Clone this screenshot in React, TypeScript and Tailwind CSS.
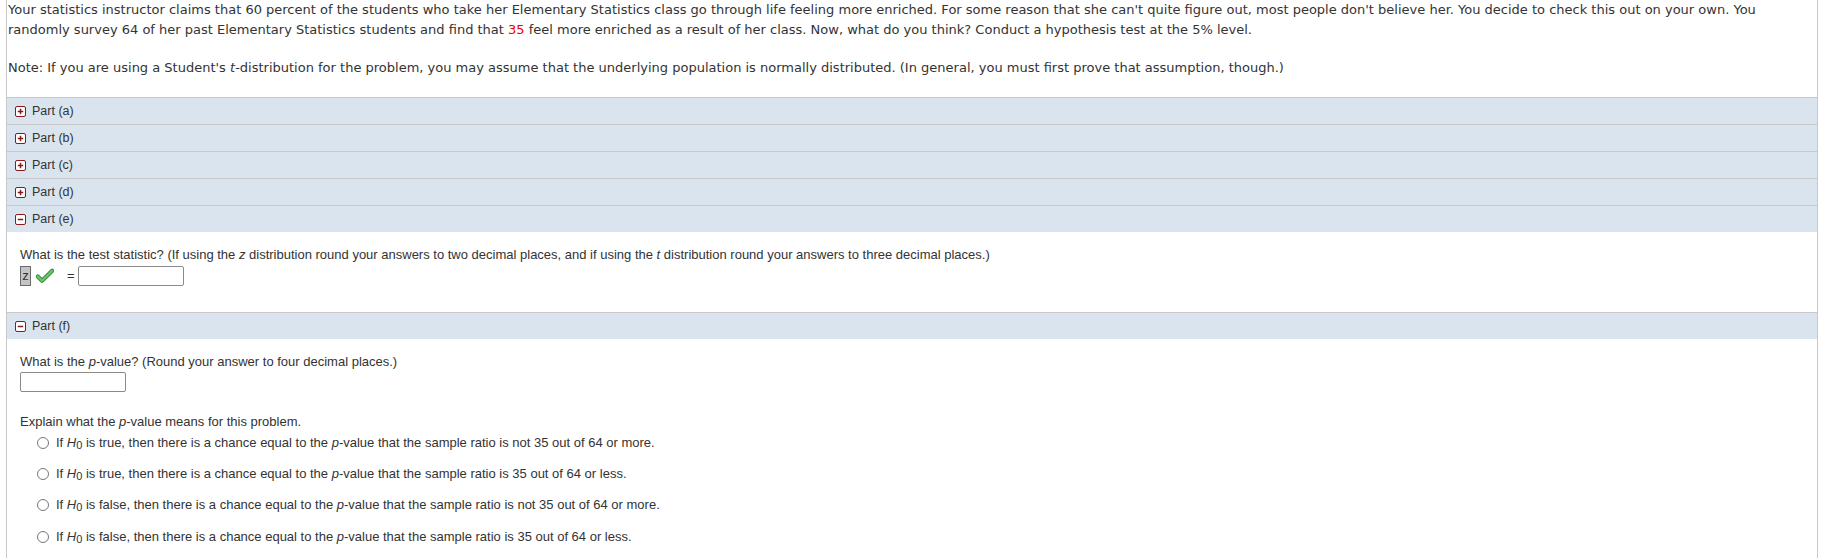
import React from 'react';

const verdana = { fontFamily: '"DejaVu Sans", Verdana, sans-serif' };

function PlusMinus({ open }: { open?: boolean }) {
  return (
    <svg width="11" height="11" viewBox="0 0 11 11" className="shrink-0">
      <rect x="0.5" y="0.5" width="10" height="10" rx="1.5" fill="#fff" stroke="#8b1a1a" />
      <path d="M2.8 5.5h5.4" stroke="#8b1a1a" strokeWidth="1.5" />
      {!open && <path d="M5.5 2.8v5.4" stroke="#8b1a1a" strokeWidth="1.5" />}
    </svg>
  );
}

function PartRow({ label, open }: { label: string; open?: boolean }) {
  return (
    <div className="flex items-center gap-[6px] h-[27px] pl-[8px] bg-[#d9e4ee] border-t border-[#c8c8c8] text-[12.5px] text-[#333]">
      <PlusMinus open={open} />
      <span>Part ({label})</span>
    </div>
  );
}

function H0() {
  return (
    <span className="italic">
      H<sub className="not-italic text-[11px] relative top-[2px]">0</sub>
    </span>
  );
}

function Radio({ children }: { children: React.ReactNode }) {
  return (
    <label className="flex items-center gap-[7px] h-[31.3px]">
      <span className="w-[12px] h-[12px] rounded-full border border-[#777] bg-white shrink-0" />
      <span>{children}</span>
    </label>
  );
}

function Check() {
  return (
    <svg width="18" height="16" viewBox="0 0 18 16">
      <path d="M1.8 8.5 L6 12.8 L16.2 2.8" fill="none" stroke="#3f8f3f" strokeWidth="4.2" strokeLinejoin="round" strokeLinecap="round" />
      <path d="M1.8 8.5 L6 12.8 L16.2 2.8" fill="none" stroke="#6cc46c" strokeWidth="2.2" strokeLinejoin="round" strokeLinecap="round" />
    </svg>
  );
}

export default function App() {
  return (
    <div className="bg-white w-[1822px] h-[558px] overflow-hidden">
      <div className="ml-[6px] w-[1812px] min-h-[558px] border-l border-r border-[#c8c8c8]">
        <div style={verdana} className="text-[13px] leading-[20px] text-[#333] pl-[1px]">
          <p>
            <span className="block">Your statistics instructor claims that 60 percent of the students who take her Elementary Statistics class go through life feeling more enriched. For some reason that she can't quite figure out, most people don't believe her. You decide to check this out on your own. You</span>
            <span>randomly survey 64 of her past Elementary Statistics students and find that </span>
            <span className="text-[#e00]">35</span>
            <span> feel more enriched as a result of her class. Now, what do you think? Conduct a hypothesis test at the 5% level.</span>
          </p>
          <p className="mt-[18px]">
            Note: If you are using a Student's <i>t</i>-distribution for the problem, you may assume that the underlying population is normally distributed. (In general, you must first prove that assumption, though.)
          </p>
        </div>

        <div className="mt-[19px]" style={{ fontFamily: '"Liberation Sans", Arial, sans-serif' }}>
          <PartRow label="a" />
          <PartRow label="b" />
          <PartRow label="c" />
          <PartRow label="d" />
          <PartRow label="e" open />

          <div className="pl-[13px] pt-[15px] pb-[26px] text-[13px] text-[#333]">
            <p className="leading-[15px]">
              What is the test statistic? (If using the <i>z</i> distribution round your answers to two decimal places, and if using the <i>t</i> distribution round your answers to three decimal places.)
            </p>
            <div className="flex items-center mt-[4px] h-[20px]">
              <span className="w-[11px] h-[20px] bg-[#c4c4c4] border border-[#6a6a6a] flex items-center justify-center text-[13px] text-[#333]">z</span>
              <span className="ml-[5px]"><Check /></span>
              <span className="ml-[13px]">=</span>
              <input className="ml-[3px] w-[106px] h-[20px] border border-[#8a8a8a] rounded-[2px] bg-white" />
            </div>
          </div>

          <PartRow label="f" open />

          <div className="pl-[13px] pt-[15px] text-[13px] text-[#333]">
            <p className="leading-[15px]">
              What is the <i>p</i>-value? (Round your answer to four decimal places.)
            </p>
            <input className="mt-[3px] block w-[106px] h-[20px] border border-[#8a8a8a] rounded-[2px] bg-white" />
            <p className="mt-[22px] leading-[15px]">Explain what the <i>p</i>-value means for this problem.</p>
            <div className="pl-[17px] -mt-[2px]">
              <Radio>If <H0 /> is true, then there is a chance equal to the <i>p</i>-value that the sample ratio is not 35 out of 64 or more.</Radio>
              <Radio>If <H0 /> is true, then there is a chance equal to the <i>p</i>-value that the sample ratio is 35 out of 64 or less.</Radio>
              <Radio>If <H0 /> is false, then there is a chance equal to the <i>p</i>-value that the sample ratio is not 35 out of 64 or more.</Radio>
              <Radio>If <H0 /> is false, then there is a chance equal to the <i>p</i>-value that the sample ratio is 35 out of 64 or less.</Radio>
            </div>
          </div>
        </div>
      </div>
    </div>
  );
}
